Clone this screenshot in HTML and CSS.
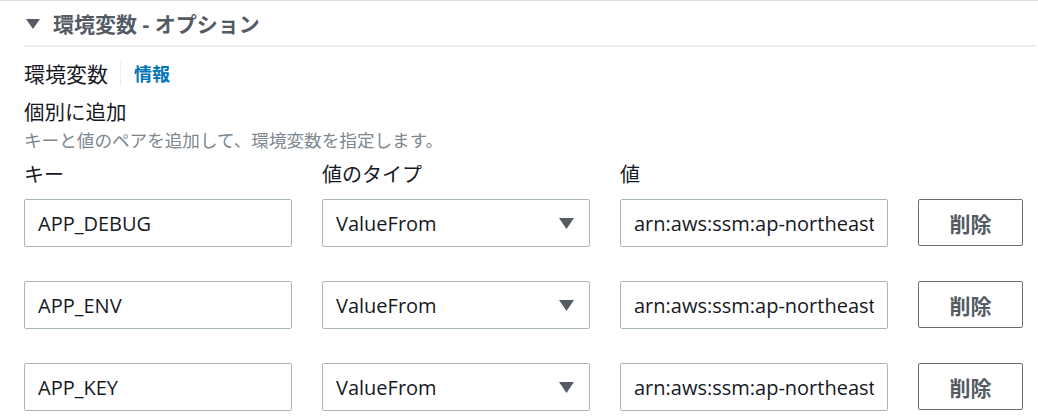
FILE: index.html
```html
<!DOCTYPE html>
<html lang="ja">
<head>
    <meta charset="UTF-8">
    <title>環境変数 - オプション</title>
    <link rel="stylesheet" href="styles.css">
</head>
<body>

    <div class="panel">
        <!-- 折りたたみヘッダー -->
        <div class="panel-head">
            <svg class="caret" width="14" height="10" viewBox="0 0 14 10"><path d="M0 0 L14 0 L7 10 Z" fill="#545b64"/></svg>
            <span class="panel-title">環境変数 - オプション</span>
        </div>
        <div class="panel-rule"></div>

        <div class="panel-body">
            <div class="field-label">
                <span>環境変数</span>
                <span class="sep"></span>
                <a class="info" href="#">情報</a>
            </div>

            <div class="group-title">個別に追加</div>
            <div class="group-desc">キーと値のペアを追加して、環境変数を指定します。</div>

            <div class="env-grid">
                <div class="col-label">キー</div>
                <div class="col-label">値のタイプ</div>
                <div class="col-label">値</div>
                <div></div>

                <input class="text-input" type="text" value="APP_DEBUG">
                <div class="select">
                    <span>ValueFrom</span>
                    <svg width="15" height="11" viewBox="0 0 15 11"><path d="M0 0 L15 0 L7.5 11 Z" fill="#545b64"/></svg>
                </div>
                <input class="text-input" type="text" value="arn:aws:ssm:ap-northeast-1:123456789012:parameter/APP_DEBUG">
                <button class="btn-remove">削除</button>

                <input class="text-input" type="text" value="APP_ENV">
                <div class="select">
                    <span>ValueFrom</span>
                    <svg width="15" height="11" viewBox="0 0 15 11"><path d="M0 0 L15 0 L7.5 11 Z" fill="#545b64"/></svg>
                </div>
                <input class="text-input" type="text" value="arn:aws:ssm:ap-northeast-1:123456789012:parameter/APP_ENV">
                <button class="btn-remove">削除</button>

                <input class="text-input" type="text" value="APP_KEY">
                <div class="select">
                    <span>ValueFrom</span>
                    <svg width="15" height="11" viewBox="0 0 15 11"><path d="M0 0 L15 0 L7.5 11 Z" fill="#545b64"/></svg>
                </div>
                <input class="text-input" type="text" value="arn:aws:ssm:ap-northeast-1:123456789012:parameter/APP_KEY">
                <button class="btn-remove">削除</button>
            </div>
        </div>
    </div>

</body>
</html>
```

FILE: styles.css
```css
body {
    margin: 0;
    background-color: #ffffff;
    font-family: "Open Sans", "Noto Sans CJK JP", sans-serif;
    color: #16191f;
}
.panel {
    border-top: 1px solid #d5dbdb;
}
.panel-head {
    height: 44px;
    display: flex;
    align-items: center;
    padding-left: 26px;
}
.caret {
    margin-right: 13px;
    margin-top: 1px;
}
.panel-title {
    font-size: 21px;
    font-weight: bold;
    color: #545b64;
}
.panel-rule {
    height: 2px;
    margin: 0 2px 0 24px;
    background-color: #eaeded;
}
.panel-body {
    padding-left: 24px;
}
.field-label {
    display: flex;
    align-items: center;
    margin-top: 15px;
    height: 24px;
    font-size: 21px;
    line-height: 24px;
}
.sep {
    width: 1px;
    height: 24px;
    background-color: #eaeded;
    margin: 0 13px 0 12px;
}
.info {
    font-size: 18px;
    font-weight: bold;
    color: #0073bb;
    text-decoration: none;
}
.group-title {
    margin-top: 14px;
    font-size: 20.5px;
    line-height: 24px;
}
.group-desc {
    margin-top: 5px;
    font-size: 17.6px;
    line-height: 22px;
    color: #7d8790;
}
.env-grid {
    display: grid;
    grid-template-columns: 268px 268px 268px 105px;
    column-gap: 30px;
    row-gap: 34px;
    margin-top: 12px;
}
.col-label {
    font-size: 20px;
    line-height: 24px;
    margin-bottom: -22px;
}
.text-input,
.select {
    box-sizing: border-box;
    height: 48px;
    border: 1px solid #aab7b8;
    border-radius: 2px;
    padding: 0 13px;
    font-family: "Open Sans", "Noto Sans CJK JP", sans-serif;
    font-size: 20px;
    color: #16191f;
    background-color: #ffffff;
    width: 100%;
    min-width: 0;
    outline: none;
}
.select {
    display: flex;
    align-items: center;
    justify-content: space-between;
    padding-right: 15px;
}
.btn-remove {
    height: 47px;
    border: 1px solid #687078;
    border-radius: 2px;
    background-color: #ffffff;
    font-family: "Open Sans", "Noto Sans CJK JP", sans-serif;
    font-size: 21px;
    font-weight: bold;
    color: #545b64;
    cursor: pointer;
}
```
